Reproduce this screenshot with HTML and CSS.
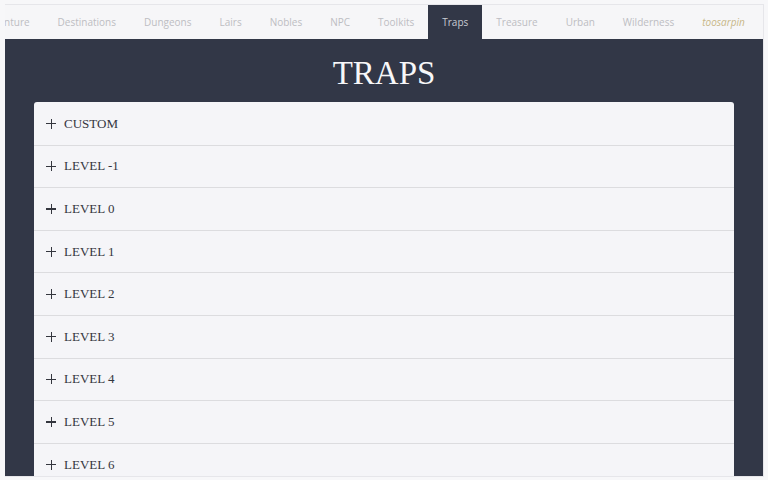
FILE: index.html
```html
<!DOCTYPE html>
<html lang="en">
<head>
<meta charset="utf-8">
<title>Traps</title>
<link rel="stylesheet" href="styles.css">
</head>
<body>
<div class="frame">
  <nav class="tabs">
    <ul class="tab-list">
      <li class="tab">Adventure</li>
      <li class="tab">Destinations</li>
      <li class="tab">Dungeons</li>
      <li class="tab">Lairs</li>
      <li class="tab">Nobles</li>
      <li class="tab">NPC</li>
      <li class="tab">Toolkits</li>
      <li class="tab active">Traps</li>
      <li class="tab">Treasure</li>
      <li class="tab">Urban</li>
      <li class="tab">Wilderness</li>
      <li class="tab author">toosarpin</li>
    </ul>
  </nav>
  <main class="panel">
    <h1 class="title">TRAPS</h1>
    <div class="accordion">
      <div class="item"><span class="plus"></span>CUSTOM</div>
      <div class="item"><span class="plus"></span>LEVEL -1</div>
      <div class="item"><span class="plus"></span>LEVEL 0</div>
      <div class="item"><span class="plus"></span>LEVEL 1</div>
      <div class="item"><span class="plus"></span>LEVEL 2</div>
      <div class="item"><span class="plus"></span>LEVEL 3</div>
      <div class="item"><span class="plus"></span>LEVEL 4</div>
      <div class="item"><span class="plus"></span>LEVEL 5</div>
      <div class="item"><span class="plus"></span>LEVEL 6</div>
    </div>
  </main>
</div>
</body>
</html>
```
FILE: styles.css
```css
html, body {
  margin: 0;
  padding: 0;
  height: 480px;
  overflow: hidden;
  background: #f7f7f9;
}

body {
  padding: 4px 4px 4px 5px;
  box-sizing: border-box;
  font-family: "Open Sans", "Liberation Sans", sans-serif;
}

.frame {
  height: 471px;
  border-top: 1px solid #e6e6ea;
  border-right: 1px solid #e6e6ea;
  border-bottom: 1px solid #e6e6ea;
  display: flex;
  flex-direction: column;
  overflow: hidden;
}

.tabs {
  height: 34px;
  flex: none;
  overflow: hidden;
  background: #f6f6f8;
}

.tab-list {
  list-style: none;
  margin: 0 0 0 -38px;
  padding: 0;
  display: flex;
  height: 100%;
  white-space: nowrap;
}

.tab {
  padding: 0 14px;
  font-size: 10px;
  line-height: 34px;
  color: #bdbdc2;
}

.tab.active {
  background: #323747;
  color: #c9ccd4;
}

.tab.author {
  font-style: italic;
  color: #c8b787;
}

.panel {
  flex: 1;
  background: #323747;
  padding: 0 29px 0 29px;
  overflow: hidden;
}

.title {
  margin: 0;
  height: 63px;
  line-height: 68px;
  text-align: center;
  font-family: "Liberation Serif", serif;
  font-weight: normal;
  font-size: 33px;
  color: #f7f7f9;
}

.accordion {
  background: #f5f5f8;
  border-radius: 3px 3px 0 0;
  padding-top: 1px;
}

.item {
  height: 41.6px;
  border-bottom: 1px solid #dcdcdf;
  display: flex;
  align-items: center;
  padding-left: 12px;
  font-family: "Liberation Serif", serif;
  font-size: 13px;
  color: #34363e;
}

.plus {
  position: relative;
  width: 10px;
  height: 10px;
  margin-right: 8px;
}

.plus::before,
.plus::after {
  content: "";
  position: absolute;
  background: #34363e;
}

.plus::before {
  left: 0;
  top: 4.5px;
  width: 10px;
  height: 1.2px;
}

.plus::after {
  top: 0;
  left: 4.5px;
  width: 1.2px;
  height: 10px;
}
```
